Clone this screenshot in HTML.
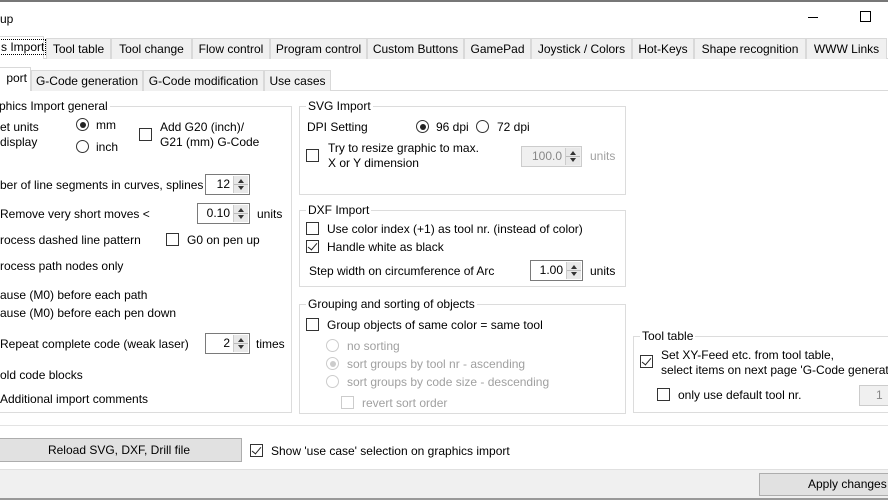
<!DOCTYPE html>
<html><head><meta charset="utf-8"><style>
*{margin:0;padding:0;box-sizing:border-box}
body{width:888px;height:500px;overflow:hidden;background:#fff;font-family:"Liberation Sans",sans-serif;font-size:12px;color:#000;position:relative}
.a{position:absolute;white-space:nowrap;line-height:14px}
.b{position:absolute}
.tab{position:absolute;top:38px;height:21px;background:#f0f0f0;border:1px solid #d9d9d9;border-bottom:none;text-align:center;line-height:20px;white-space:nowrap}
.itab{position:absolute;top:70px;height:21px;background:#f0f0f0;border:1px solid #d9d9d9;border-bottom:none;text-align:center;line-height:20px;white-space:nowrap}
.grp{position:absolute;border:1px solid #dcdcdc}
.gt{position:absolute;top:-8px;left:6px;background:#fff;padding:0 2px;line-height:14px;white-space:nowrap}
.cb{position:absolute;width:13px;height:13px;border:1px solid #333;background:#fff}
.cb.dis{border-color:#ccc}
.ck::after{content:"";position:absolute;left:3px;top:0px;width:4px;height:8px;border:solid #222;border-width:0 1.3px 1.3px 0;transform:rotate(40deg)}
.rb{position:absolute;width:13px;height:13px;border:1px solid #333;border-radius:50%;background:#fff}
.rb.on::after{content:"";position:absolute;left:2.5px;top:2.5px;width:6px;height:6px;border-radius:50%;background:#222}
.rb.dis{border-color:#ccc}
.rb.dis.on::after{background:#ccc}
.spin{position:absolute;height:21px;border:1px solid #7a7a7a;background:#fff;text-align:right;padding-right:19px;line-height:19px}
.spin.dis{background:#f0f0f0;border-color:#ccc;color:#888}
.spin i{position:absolute;right:1px;top:1px;width:15px;height:17px;background:#e8e8e8;border-left:1px solid #ccc}
.spin i::before{content:"";position:absolute;left:4px;top:3px;border:3.5px solid transparent;border-bottom:4px solid #333;border-top:none}
.spin i::after{content:"";position:absolute;left:4px;top:10px;border:3.5px solid transparent;border-top:4px solid #333;border-bottom:none}
.spin i b{position:absolute;left:0;right:0;top:8px;border-top:1px solid #bbb}
.g{color:#a0a0a0}
</style></head><body>
<div class="b" style="left:0;top:0;width:888px;height:2px;background:#777"></div>
<div class="a" style="left:0;top:12px">up</div>
<div class="b" style="left:808px;top:17px;width:10px;height:1px;background:#000"></div>
<div class="b" style="left:860px;top:11px;width:11px;height:11px;border:1px solid #000"></div>

<div class="b" style="left:0;top:58px;width:888px;height:1px;background:#d9d9d9"></div>
<div class="tab" style="left:-2px;top:36px;width:46px;height:23px;background:#fff;text-align:right;padding-right:3px"><span style="border:1px dotted #000;padding:0 1px">s Import</span></div>
<div class="tab" style="left:46px;width:65px">Tool table</div>
<div class="tab" style="left:111px;width:81px">Tool change</div>
<div class="tab" style="left:192px;width:78px">Flow control</div>
<div class="tab" style="left:270px;width:97px">Program control</div>
<div class="tab" style="left:367px;width:97px">Custom Buttons</div>
<div class="tab" style="left:464px;width:67px">GamePad</div>
<div class="tab" style="left:531px;width:101px">Joystick / Colors</div>
<div class="tab" style="left:632px;width:62px">Hot-Keys</div>
<div class="tab" style="left:694px;width:112px">Shape recognition</div>
<div class="tab" style="left:806px;width:81px">WWW Links</div>

<div class="b" style="left:0;top:90px;width:888px;height:1px;background:#d9d9d9"></div>
<div class="itab" style="left:-2px;top:67px;width:33px;height:24px;background:#fff;text-align:right;padding-right:3px">port</div>
<div class="itab" style="left:31px;width:112px">G-Code generation</div>
<div class="itab" style="left:143px;width:121px">G-Code modification</div>
<div class="itab" style="left:264px;width:67px">Use cases</div>

<!-- left group -->
<div class="grp" style="left:-10px;top:106px;width:302px;height:307px"><div class="gt" style="left:6px">phics Import general</div></div>
<div class="a" style="left:0;top:120px">et units</div>
<div class="a" style="left:0;top:135px">display</div>
<div class="rb on" style="left:76px;top:118px"></div><div class="a" style="left:96px;top:118px">mm</div>
<div class="rb" style="left:76px;top:140px"></div><div class="a" style="left:96px;top:140px">inch</div>
<div class="cb" style="left:139px;top:128px"></div>
<div class="a" style="left:160px;top:120px">Add G20 (inch)/</div>
<div class="a" style="left:160px;top:135px">G21 (mm) G-Code</div>
<div class="a" style="left:0;top:178px">ber of line segments in curves, splines</div>
<div class="spin" style="left:205px;top:174px;width:45px">12<i><b></b></i></div>
<div class="a" style="left:0;top:207px">Remove very short moves &lt;</div>
<div class="spin" style="left:197px;top:203px;width:53px">0.10<i><b></b></i></div>
<div class="a" style="left:257px;top:207px">units</div>
<div class="a" style="left:0;top:233px">rocess dashed line pattern</div>
<div class="cb" style="left:166px;top:233px"></div><div class="a" style="left:187px;top:233px">G0 on pen up</div>
<div class="a" style="left:0;top:259px">rocess path nodes only</div>
<div class="a" style="left:0;top:288px">ause (M0) before each path</div>
<div class="a" style="left:0;top:306px">ause (M0) before each pen down</div>
<div class="a" style="left:0;top:337px">Repeat complete code (weak laser)</div>
<div class="spin" style="left:205px;top:333px;width:45px">2<i><b></b></i></div>
<div class="a" style="left:256px;top:337px">times</div>
<div class="a" style="left:0;top:368px">old code blocks</div>
<div class="a" style="left:0;top:392px">Additional import comments</div>

<!-- SVG -->
<div class="grp" style="left:299px;top:106px;width:327px;height:89px"><div class="gt">SVG Import</div></div>
<div class="a" style="left:307px;top:120px">DPI Setting</div>
<div class="rb on" style="left:416px;top:120px"></div><div class="a" style="left:436px;top:120px">96 dpi</div>
<div class="rb" style="left:476px;top:120px"></div><div class="a" style="left:497px;top:120px">72 dpi</div>
<div class="cb" style="left:306px;top:149px"></div>
<div class="a" style="left:328px;top:141px">Try to resize graphic to max.</div>
<div class="a" style="left:328px;top:156px">X or Y dimension</div>
<div class="spin dis" style="left:521px;top:146px;width:61px">100.0<i><b></b></i></div>
<div class="a g" style="left:590px;top:149px">units</div>

<!-- DXF -->
<div class="grp" style="left:299px;top:210px;width:327px;height:77px"><div class="gt">DXF Import</div></div>
<div class="cb" style="left:306px;top:222px"></div><div class="a" style="left:327px;top:222px">Use color index (+1) as tool nr. (instead of color)</div>
<div class="cb ck" style="left:306px;top:240px"></div><div class="a" style="left:327px;top:240px">Handle white as black</div>
<div class="a" style="left:309px;top:264px">Step width on circumference of Arc</div>
<div class="spin" style="left:530px;top:260px;width:53px">1.00<i><b></b></i></div>
<div class="a" style="left:590px;top:264px">units</div>

<!-- Grouping -->
<div class="grp" style="left:299px;top:304px;width:327px;height:110px"><div class="gt">Grouping and sorting of objects</div></div>
<div class="cb" style="left:306px;top:318px"></div><div class="a" style="left:327px;top:318px">Group objects of same color = same tool</div>
<div class="rb dis" style="left:326px;top:339px"></div><div class="a g" style="left:347px;top:339px">no sorting</div>
<div class="rb dis on" style="left:326px;top:357px"></div><div class="a g" style="left:347px;top:357px">sort groups by tool nr - ascending</div>
<div class="rb dis" style="left:326px;top:375px"></div><div class="a g" style="left:347px;top:375px">sort groups by code size - descending</div>
<div class="cb dis" style="left:341px;top:396px"></div><div class="a g" style="left:362px;top:396px">revert sort order</div>

<!-- Tool table -->
<div class="grp" style="left:633px;top:336px;width:262px;height:77px"><div class="gt">Tool table</div></div>
<div class="cb ck" style="left:640px;top:355px"></div>
<div class="a" style="left:661px;top:348px">Set XY-Feed etc. from tool table,</div>
<div class="a" style="left:661px;top:363px">select items on next page 'G-Code generation'</div>
<div class="cb" style="left:657px;top:388px"></div><div class="a" style="left:678px;top:388px">only use default tool nr.</div>
<div class="spin dis" style="left:859px;top:385px;width:50px;text-align:left;padding-left:16px">1</div>

<div class="b" style="left:0;top:425px;width:888px;height:1px;background:#e3e3e3"></div>
<div class="b" style="left:-4px;top:438px;width:234px;height:0"></div>
<div class="b" style="left:-4px;top:438px;width:246px;height:24px;background:#e1e1e1;border:1px solid #adadad;text-align:center;line-height:22px">Reload SVG, DXF, Drill file</div>
<div class="cb ck" style="left:250px;top:444px"></div><div class="a" style="left:271px;top:444px">Show 'use case' selection on graphics import</div>
<div class="b" style="left:0;top:469px;width:888px;height:31px;background:#f0f0f0;border-top:1px solid #e0e0e0"></div>
<div class="b" style="left:0;top:498px;width:888px;height:2px;background:#999"></div>
<div class="b" style="left:759px;top:473px;width:140px;height:23px;background:#e1e1e1;border:1px solid #adadad;line-height:21px;padding-left:48px;white-space:nowrap">Apply changes</div>
</body></html>
